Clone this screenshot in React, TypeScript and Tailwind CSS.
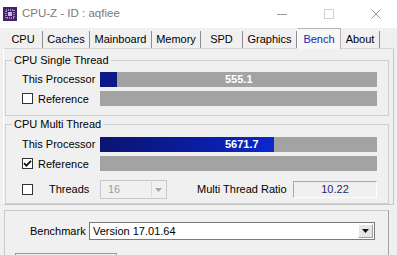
import React from 'react';

const FONT = { fontFamily: '"Liberation Sans", Arial, sans-serif' };

const TABS = [
  { label: 'CPU', w: 39 },
  { label: 'Caches', w: 47 },
  { label: 'Mainboard', w: 62 },
  { label: 'Memory', w: 49 },
  { label: 'SPD', w: 42 },
  { label: 'Graphics', w: 54 },
  { label: 'Bench', w: 44, active: true },
  { label: 'About', w: 39 },
];

function Checkbox({ checked }: { checked?: boolean }) {
  return (
    <span className="flex h-[11px] w-[11px] shrink-0 items-center justify-center border border-[#333] bg-white">
      {checked && (
        <svg width="9" height="9" viewBox="0 0 9 9">
          <path d="M1 4.2 L3.4 6.6 L8 1.8" stroke="#111" strokeWidth="1.8" fill="none" />
        </svg>
      )}
    </span>
  );
}

function Bar({ pct, value, gradient }: { pct: number; value?: string; gradient?: boolean }) {
  return (
    <div className="relative h-[15px] w-[277px] bg-[#a3a3a3]">
      {pct > 0 && (
        <div
          className={
            gradient
              ? 'h-full bg-gradient-to-r from-[#0a1470] via-[#0a1c9c] to-[#0a28d0]'
              : 'h-full bg-[#0b1a88]'
          }
          style={{ width: `${pct}%` }}
        />
      )}
      {value && (
        <span className="absolute left-[125px] top-0 h-full text-[11px] leading-[15px] font-bold text-white">
          {value}
        </span>
      )}
    </div>
  );
}

export default function App() {
  return (
    <div className="h-[255px] w-[397px] overflow-hidden bg-[#f0f0f0] text-[11px] text-black" style={FONT}>
      {/* title bar */}
      <div className="flex h-[28px] items-center bg-white">
        <svg className="ml-[3px]" width="14" height="14" viewBox="0 0 14 14">
          <rect width="14" height="14" fill="#45206e" />
          <rect x="3" y="3" width="8" height="8" fill="none" stroke="#fff" strokeWidth="1" strokeDasharray="1 1" />
          <rect x="5" y="5" width="4" height="4" fill="#c9b8e6" />
        </svg>
        <span className="ml-[5px] text-[11.5px] text-[#7a7a7a]">CPU-Z - ID : aqfiee</span>
        <div className="ml-auto flex items-center">
          <div className="mr-[37px] h-px w-[10px] bg-[#9a9a9a]" />
          <div className="mr-[37px] h-[10px] w-[10px] border border-[#d0d0d0]" />
          <svg className="mr-[16px]" width="10" height="10" viewBox="0 0 10 10">
            <path d="M0.5 0.5 L9.5 9.5 M9.5 0.5 L0.5 9.5" stroke="#9a9a9a" strokeWidth="1" />
          </svg>
        </div>
      </div>

      {/* tabs */}
      <div className="flex h-[20px] items-end pl-[4px]">
        {TABS.map((t) =>
          t.active ? (
            <div
              key={t.label}
              className="relative z-10 -mb-px flex h-[21px] items-center justify-center border-x border-t border-[#b4b4b4] border-l-white bg-[#f7f7f7] text-[#2222a8]"
              style={{ width: t.w }}
            >
              {t.label}
            </div>
          ) : (
            <div
              key={t.label}
              className="flex h-[17px] items-center justify-center border-r border-[#8e8e8e]"
              style={{ width: t.w }}
            >
              {t.label}
            </div>
          )
        )}
      </div>

      {/* tab panel */}
      <div className="mx-[3px] h-[157px] border border-[#c6c6c6] border-l-white border-t-[#d6d6d6] px-[1px]">
        <fieldset className="mt-[5px] mr-[3px] border border-[#cfcfcf] pl-[16px] pr-[11px] pt-[4px] pb-[8px]">
          <legend className="ml-[-10px] px-[2px] leading-[13px]">CPU Single Thread</legend>
          <div className="flex items-center">
            <span className="w-[78px]">This Processor</span>
            <Bar pct={6.2} value="555.1" />
          </div>
          <div className="mt-[3px] flex items-center">
            <div className="flex w-[78px] items-center gap-[5px]">
              <Checkbox />
              <span>Reference</span>
            </div>
            <Bar pct={0} />
          </div>
        </fieldset>

        <fieldset className="mt-[2px] mr-[3px] border border-[#cfcfcf] pl-[16px] pr-[11px] pt-[5px] pb-[4px]">
          <legend className="ml-[-10px] px-[2px] leading-[13px]">CPU Multi Thread</legend>
          <div className="flex items-center">
            <span className="w-[78px]">This Processor</span>
            <Bar pct={62.8} value="5671.7" gradient />
          </div>
          <div className="mt-[3px] flex items-center">
            <div className="flex w-[78px] items-center gap-[5px]">
              <Checkbox checked />
              <span>Reference</span>
            </div>
            <Bar pct={0} />
          </div>
          <div className="mt-[8px] flex items-center">
            <div className="flex w-[78px] items-center">
              <Checkbox />
              <span className="ml-[16px]">Threads</span>
            </div>
            <div className="flex h-[19px] w-[67px] items-center border border-[#c8c8c8] bg-[#f0f0f0]">
              <span className="ml-[7px] flex-1 text-[#9c9c9c]">16</span>
              <div className="mr-[1px] flex h-[15px] w-[14px] items-center justify-center border-l border-[#dadada]">
                <svg width="7" height="4" viewBox="0 0 7 4">
                  <path d="M0 0 H7 L3.5 4 Z" fill="#a8a8a8" />
                </svg>
              </div>
            </div>
            <span className="ml-[30px]">Multi Thread Ratio</span>
            <div className="ml-auto flex h-[17px] w-[84px] items-center justify-center border border-[#a9a9a9] border-r-white border-b-white text-[#1e2a66]">
              10.22
            </div>
          </div>
        </fieldset>
      </div>

      {/* benchmark box */}
      <div className="mt-[5px] ml-[4px] h-[60px] w-[385px] border border-[#c9c9c9] border-r-[#a0a0a0] pt-[11px]">
        <div className="flex items-center">
          <span className="ml-[25px] w-[59px]">Benchmark</span>
          <div className="flex h-[18px] w-[286px] items-center border border-[#7a7a7a] bg-white">
            <span className="ml-[3px] flex-1">Version 17.01.64</span>
            <div className="mr-[1px] flex h-[14px] w-[15px] items-center justify-center border border-[#a0a0a0] border-l-white border-t-white bg-[#e6e6e6]">
              <svg width="7" height="4" viewBox="0 0 7 4">
                <path d="M0 0 H7 L3.5 4 Z" fill="#111" />
              </svg>
            </div>
          </div>
        </div>
        <div className="mt-[13px] flex">
          <div className="ml-[10px] h-[8px] w-[102px] border border-[#9a9a9a]" />
        </div>
      </div>
    </div>
  );
}
